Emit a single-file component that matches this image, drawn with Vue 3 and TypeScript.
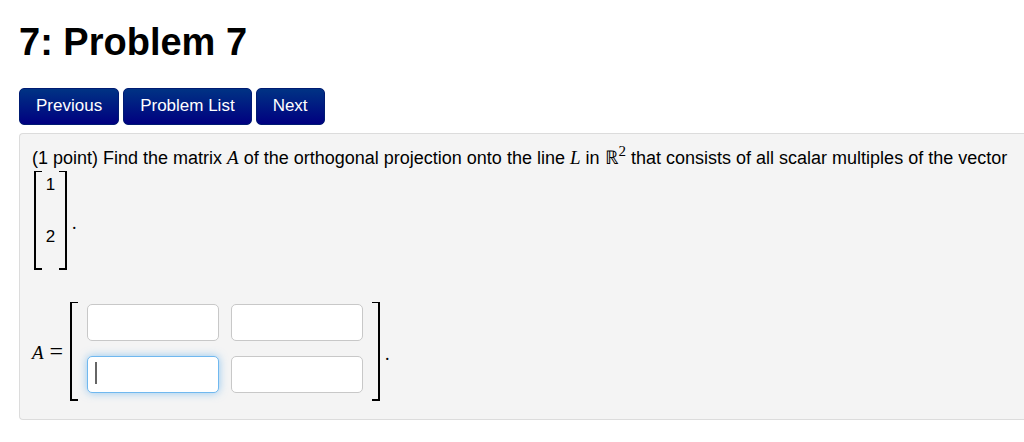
<script setup lang="ts">
import { ref } from 'vue'

const navigation: string[] = ['Previous', 'Problem List', 'Next']
const vector: number[] = [1, 2]
const answers = ref<string[]>(['', '', '', ''])
const active = ref<number>(2)

function cellLabel(index: number): string {
  return `Row ${Math.floor(index / 2) + 1}, column ${(index % 2) + 1}`
}
</script>

<template>
  <main class="page">
    <h1 class="title">7: Problem 7</h1>

    <nav class="nav" aria-label="Problem navigation">
      <button v-for="label in navigation" :key="label" type="button" class="nav-button">{{ label }}</button>
    </nav>

    <section class="problem">
      <p class="statement">(1 point) Find the matrix <i class="math">A</i> of the orthogonal projection onto the line <i class="math">L</i> in <span class="math">ℝ<sup>2</sup></span> that consists of all scalar multiples of the vector</p>

      <div class="row vector-row">
        <div class="bracket left"></div>
        <div class="vector">
          <span v-for="n in vector" :key="n">{{ n }}</span>
        </div>
        <div class="bracket right"></div>
        <span class="period">.</span>
      </div>

      <div class="row answer-row">
        <span class="equation"><i>A</i><span>=</span></span>
        <div class="bracket left"></div>
        <div class="matrix">
          <div v-for="(_, i) in answers" :key="i" class="cell">
            <input
              v-model="answers[i]"
              type="text"
              class="entry"
              :class="{ active: active === i }"
              :aria-label="cellLabel(i)"
              @focus="active = i"
            />
            <span v-if="active === i && !answers[i]" class="caret"></span>
          </div>
        </div>
        <div class="bracket right"></div>
        <span class="period">.</span>
      </div>
    </section>
  </main>
</template>

<style>
body {
  background: #fff;
}
</style>

<style scoped>
.page {
  padding: 20px 0 20px 19px;
  color: #000;
  font-family: "Liberation Sans", Arial, sans-serif;
  font-size: 18px;
  line-height: 24px;
}

.title {
  margin: 0 0 24px;
  font-size: 38px;
  line-height: 44px;
}

.nav {
  display: flex;
  gap: 4px;
  margin-bottom: 8px;
}

.nav-button {
  height: 37px;
  padding: 0 16px 2px;
  border: 1px solid #001b72;
  border-radius: 5px;
  background: linear-gradient(#003384, #000080);
  color: #fff;
  font: inherit;
  font-size: 17px;
  cursor: pointer;
}

.problem {
  padding: 10px 0 18px 12px;
  border: 1px solid #dcdcdc;
  border-right: 0;
  border-radius: 4px 0 0 4px;
  background: #f4f4f4;
}

.statement {
  margin: 0;
}

.math,
.equation {
  font-family: "Liberation Serif", "Times New Roman", serif;
  font-size: 19px;
}

.math {
  line-height: 1;
}

.math sup {
  font-size: 15px;
  line-height: 1;
  vertical-align: 8px;
}

.row {
  display: flex;
  align-items: center;
}

.vector-row {
  margin: 1px 0 0 2px;
}

.answer-row {
  margin-top: 32px;
}

.bracket {
  box-sizing: border-box;
  width: 8px;
  height: 99px;
  border: solid #000;
}

.bracket.left {
  border-width: 1px 0 2px 2px;
}

.bracket.right {
  border-width: 1px 2px 2px 0;
}

.vector {
  display: flex;
  flex-direction: column;
  gap: 28px;
  width: 17px;
  padding-bottom: 20px;
  text-align: center;
  font-size: 17px;
}

.period {
  padding: 4px 0 0 5px;
  font-family: "Liberation Serif", "Times New Roman", serif;
}

.equation {
  display: flex;
  align-items: baseline;
  gap: 6px;
  width: 38px;
}

.equation span {
  font-size: 24px;
}

.matrix {
  display: grid;
  grid-template-columns: 132px 132px;
  gap: 15px 12px;
  margin: 0 9px;
  padding-bottom: 6px;
}

.cell {
  position: relative;
}

.entry {
  display: block;
  box-sizing: border-box;
  width: 100%;
  height: 37px;
  padding: 0 8px;
  border: 1px solid #c8c8c8;
  border-radius: 5px;
  outline: 0;
  background: #fff;
  color: #555;
  font: inherit;
}

.entry.active {
  border-color: #70b8ef;
  box-shadow: 0 0 9px rgba(82, 168, 236, 0.6);
}

.caret {
  position: absolute;
  top: 6px;
  left: 8px;
  width: 2px;
  height: 22px;
  background: #666;
  pointer-events: none;
}
</style>
